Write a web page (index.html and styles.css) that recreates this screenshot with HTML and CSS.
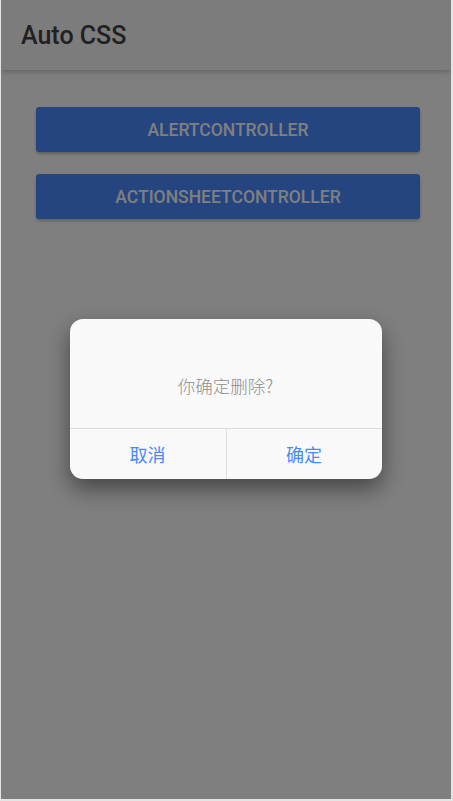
FILE: index.html
```html
<!DOCTYPE html>
<html lang="zh-CN">
<head>
<meta charset="utf-8">
<title>Auto CSS</title>
<link rel="stylesheet" href="styles.css">
</head>
<body>
<div class="device">
  <header class="toolbar">
    <h1 class="toolbar-title">Auto CSS</h1>
  </header>
  <main class="content">
    <button class="btn-block">AlertController</button>
    <button class="btn-block">ActionSheetController</button>
  </main>

  <div class="backdrop"></div>
  <div class="alert-wrap">
    <div class="alert">
      <div class="alert-message">你确定删除?</div>
      <div class="alert-actions">
        <button class="alert-btn">取消</button>
        <button class="alert-btn">确定</button>
      </div>
    </div>
  </div>
</div>
</body>
</html>
```

FILE: styles.css
```css
html, body {
  margin: 0;
  padding: 0;
  height: 100%;
  background: #e4e4e4;
}

.device {
  position: relative;
  box-sizing: border-box;
  height: 801px;
  width: 453px;
  border-left: 1px solid #e4e4e4;
  border-right: 2px solid #e4e4e4;
  border-bottom: 2px solid #e4e4e4;
  background: #ffffff;
  overflow: hidden;
  font-family: Roboto, "Noto Sans", sans-serif;
}

.toolbar {
  height: 70px;
  display: flex;
  align-items: center;
  padding: 0 20px;
  background: #f8f8f8;
  box-shadow: 0 2px 5px rgba(0, 0, 0, 0.22);
  position: relative;
  z-index: 1;
}

.toolbar-title {
  margin: 0;
  font-size: 25px;
  font-weight: 500;
  color: #424242;
  letter-spacing: 0;
}

.content {
  display: flex;
  flex-direction: column;
  gap: 22px;
  padding: 37px 31px 0 35px;
}

.btn-block {
  height: 45px;
  border: 0;
  border-radius: 3px;
  background: #488aff;
  color: #ffffff;
  font-family: Roboto, sans-serif;
  font-weight: 500;
  font-size: 17.5px;
  text-transform: uppercase;
  box-shadow: 0 2px 3px rgba(0, 0, 0, 0.25);
  padding: 0;
}

.backdrop {
  position: absolute;
  inset: 0;
  background: rgba(0, 0, 0, 0.5);
  z-index: 2;
}

.alert-wrap {
  position: absolute;
  inset: 0;
  z-index: 3;
  display: flex;
  justify-content: center;
  padding-top: 319px;
  align-items: flex-start;
}

.alert {
  width: 312px;
  background: #f9f9f9;
  border-radius: 13px;
  overflow: hidden;
  box-shadow: 0 10px 22px rgba(0, 0, 0, 0.45);
  margin-right: 1px;
}

.alert-message {
  height: 109px;
  display: flex;
  align-items: center;
  justify-content: center;
  font-family: "Noto Sans CJK SC", sans-serif;
  font-size: 17.5px;
  font-weight: 300;
  color: #8e8e8e;
  padding-top: 24px;
  box-sizing: border-box;
}

.alert-actions {
  display: grid;
  grid-template-columns: 1fr 1fr;
  border-top: 1px solid #dcdce2;
}

.alert-btn {
  height: 50px;
  border: 0;
  background: transparent;
  font-family: "Noto Sans CJK SC", sans-serif;
  font-size: 18px;
  color: #488aff;
  padding: 0;
}

.alert-btn + .alert-btn {
  border-left: 1px solid #dcdce2;
}
```
